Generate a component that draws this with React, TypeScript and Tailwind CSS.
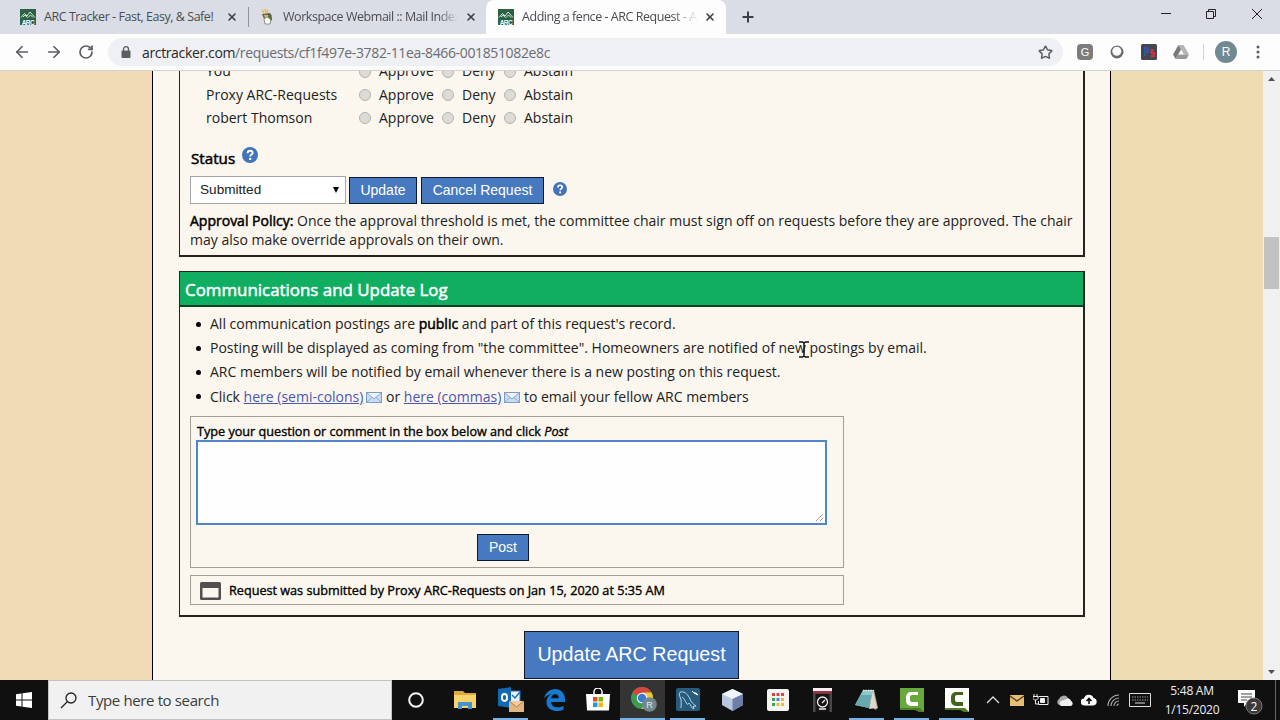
import React from 'react'
import { ArrowLeft, ArrowRight, RotateCw, Star, X, Plus, Minus } from 'lucide-react'

const bold = '[-webkit-text-stroke:0.5px_currentColor]'

function ArcIcon() {
  return (
    <svg width="16" height="16" viewBox="0 0 16 16" className="shrink-0">
      <rect width="16" height="16" fill="#2c6143" />
      <path d="M1 8.500 4.500 4.500 7 7l3-4 5 5.500M3 8l2-1.800L7.500 8.500M8 8.500l2.500-2.500L13 8.500" stroke="#dbe8df" strokeWidth="1" fill="none" />
      <text x="8" y="15.500" textAnchor="middle" fontSize="6.500" fontWeight="bold" fontFamily="Liberation Sans" fill="#fff">ARC</text>
    </svg>
  )
}

function WebmailIcon() {
  return (
    <svg width="12" height="16" viewBox="0 0 12 16" className="shrink-0">
      <path d="M1 1l2 3M4 0l1 3M7 1L6 4" stroke="#eeb45c" strokeWidth="1.500" />
      <path d="M1 5l8-1 2 3-2 3H3z" fill="#62683d" />
      <path d="M3 6h4v3H4z" fill="#d8b777" />
      <path d="M3 10l3-2 4 2-1 5H4z" fill="#fff" stroke="#777d5c" strokeWidth=".8" />
      <path d="M8 9l3-1v4z" fill="#4e7443" />
    </svg>
  )
}

function TabBar() {
  return (
    <div className="flex h-[34px] bg-[#dadde5] pl-5 text-[12.5px] tracking-[-0.46px] text-[#4a4c50]">
      <div className="flex w-[228px] items-center">
        <ArcIcon />
        <span className="ml-2 w-[178px] whitespace-nowrap">ARC Tracker - Fast, Easy, &amp; Safe!</span>
        <X size={12} strokeWidth={3.2} className="ml-1 text-[#3e4044]" />
      </div>
      <div className="my-auto h-5 w-px bg-[#8f9298]" />
      <div className="flex w-[237px] items-center pl-3">
        <WebmailIcon />
        <span className="ml-[10px] w-[175px] overflow-hidden whitespace-nowrap [mask-image:linear-gradient(to_right,black_155px,transparent)]">Workspace Webmail :: Mail Index</span>
        <X size={12} strokeWidth={3.2} className="ml-[7px] shrink-0 text-[#3e4044]" />
      </div>
      <div className="flex w-[240px] items-center rounded-t-lg bg-[#fdfdfe] pl-3">
        <ArcIcon />
        <span className="ml-2 w-[176px] overflow-hidden whitespace-nowrap [mask-image:linear-gradient(to_right,black_150px,transparent)]">Adding a fence - ARC Request - ARC</span>
        <X size={12} strokeWidth={3.2} className="ml-[6px] shrink-0 text-[#3e4044]" />
      </div>
      <div className="flex flex-1 items-center pl-[14px]">
        <Plus size={16} strokeWidth={3} className="text-[#3c4043]" />
      </div>
      <div className="flex items-start pt-[7px] pr-[17px] text-[#222]">
        <svg width="10" height="12" viewBox="0 0 10 12" stroke="#222"><path d="M0 6.500h10" /></svg>
        <svg width="12" height="12" viewBox="0 0 12 12" className="ml-[34px] mt-px" fill="none" stroke="#222">
          <path d="M1.500 3.500h7v7h-7zM3.500 3V1.500h7v7H9" />
        </svg>
        <svg width="12" height="12" viewBox="0 0 12 12" className="ml-[34px] mt-px" stroke="#222">
          <path d="M1 1l10 10M11 1L1 11" />
        </svg>
      </div>
    </div>
  )
}

function AddressBar() {
  return (
    <div className="flex h-[37px] items-center border-b border-[#d4d2cc] bg-[#fdfdfe] pl-[13px] text-[#5b5e62]">
      <ArrowLeft size={18} strokeWidth={2.3} />
      <ArrowRight size={18} strokeWidth={2.3} className="ml-[14px]" />
      <RotateCw size={16} strokeWidth={2.6} className="ml-[15px]" />
      <div className="ml-[14px] flex h-7 w-[955px] items-center rounded-full bg-[#eff0f3] pl-[13px]">
        <svg width="10" height="12" viewBox="0 0 10 12">
          <rect x="0.500" y="4.500" width="9" height="7.500" rx="1" fill="#5b5e62" />
          <path d="M2.500 5V3.200a2.500 2.500 0 015 0V5" fill="none" stroke="#5b5e62" strokeWidth="1.300" />
        </svg>
        <span className="ml-[11px] flex-1 whitespace-nowrap text-[14px] tracking-[-0.36px] text-[#6a6d72]">
          <span className="text-[#26282b]">arctracker.com</span>/requests/cf1f497e-3782-11ea-8466-001851082e8c
        </span>
        <Star size={15} strokeWidth={2.4} className="mr-[10px]" />
      </div>
      <div className="ml-[14px] flex size-4 items-center justify-center rounded-sm bg-[#7c7c7f] font-['Liberation_Sans'] text-[11px] text-white">G</div>
      <svg width="14" height="14" viewBox="0 0 14 14" className="ml-[17px]">
        <circle cx="7" cy="7" r="6.500" fill="#696b6e" />
        <circle cx="6.800" cy="6.300" r="4.500" fill="#fafafa" />
      </svg>
      <svg width="16" height="16" viewBox="0 0 16 16" className="ml-[17px]">
        <rect width="16" height="16" rx="1.500" fill="#45474d" />
        <path d="M4 12V4h3v4H4" stroke="#2e57a8" strokeWidth="2" fill="none" />
        <path d="M13 6h-2.500v3H13v3h-3" stroke="#d02f44" strokeWidth="2" fill="none" />
      </svg>
      <svg width="16" height="14" viewBox="0 0 16 14" className="ml-4">
        <path d="M5.500 0h5L16 9.500h-5z" fill="#b5b5b5" />
        <path d="M5.500 0L8 4.500 2.700 14 0 9.500z" fill="#777" />
        <path d="M5.200 9.500H16L13.400 14H2.700z" fill="#999" />
      </svg>
      <div className="ml-[14px] h-4 w-px bg-[#d4d6da]" />
      <div className="ml-[11px] flex size-[22px] items-center justify-center rounded-full bg-[#718991] font-['Liberation_Sans'] text-[12px] text-white">R</div>
      <svg width="4" height="14" viewBox="0 0 4 14" className="ml-[19px]" fill="#5b5e62">
        <circle cx="2" cy="2" r="1.500" />
        <circle cx="2" cy="7" r="1.500" />
        <circle cx="2" cy="12" r="1.500" />
      </svg>
    </div>
  )
}

function Help({ size }: { size: number }) {
  return (
    <svg width={size} height={size} viewBox="0 0 16 16">
      <circle cx="8" cy="8" r="8" fill="#4373b8" />
      <path d="M5.600 6.200C5.600 4.500 6.700 3.700 8.100 3.700s2.500.8 2.500 2.200c0 1.700-2.300 1.700-2.300 3.500" fill="none" stroke="#fff" strokeWidth="1.900" />
      <circle cx="8.200" cy="11.900" r="1.200" fill="#fff" />
    </svg>
  )
}

function Radio() {
  return <span className="mt-[2px] block size-3 rounded-full border border-[#b5b3ae] bg-[#dddbd6]" />
}

function VoteRow({ name }: { name: string }) {
  return (
    <div className="flex h-[23.4px] items-center pl-[15px]">
      <span className="w-[153px]">{name}</span>
      <Radio />
      <span className="ml-[8px] w-[63px]">Approve</span>
      <Radio />
      <span className="ml-[8px] w-[42px]">Deny</span>
      <Radio />
      <span className="ml-[8px]">Abstain</span>
    </div>
  )
}

function Envelope() {
  return (
    <svg width="16" height="11" viewBox="0 0 16 11" className="ml-[3px] inline-block">
      <rect x=".5" y=".5" width="15" height="10" fill="#c9dcf3" stroke="#7f9cc9" />
      <path d="M1 1l7 6 7-6M1 10l5-4.500M15 10l-5-4.500" stroke="#8fadd8" fill="none" />
      <path d="M2 1h12L8 6z" fill="#edf4fc" />
    </svg>
  )
}

const btn = "flex h-[27px] items-center justify-center border-[1.500px] border-[#10182a] bg-[#4679bf] font-['Liberation_Sans'] text-[14px] text-white"

function Page() {
  return (
    <div className="flex h-[609px] overflow-hidden bg-[#efdab4]">
      <div className="w-[152px] shrink-0 bg-[#f0dab5]" />
      <main className="h-[609px] w-[959px] shrink-0 overflow-hidden border-x border-black bg-[#fbf6ee] pl-[26px] text-[14px] text-[#222]">
        <section className="h-[186px] w-[906px] overflow-hidden border-2 border-t-0 border-l border-[#24231f] pl-[11px]">
          <div className="-mt-[12px]">
            <VoteRow name="You" />
            <VoteRow name="Proxy ARC-Requests" />
            <VoteRow name="robert Thomson" />
          </div>
          <div className="mt-[14px] flex h-[24px] items-center text-[15.2px] text-black">
            <span className={`mt-[6px] ${bold}`}>Status</span>
            <span className="ml-[7px]"><Help size={16} /></span>
          </div>
          <div className="mt-[9px] flex items-center">
            <div className="-ml-px flex h-7 w-[156px] items-center justify-between border border-[#a3a6ab] bg-white pr-[6px] pl-[9px] font-['Liberation_Sans'] text-[13.6px] text-[#222]">
              Submitted
              <svg width="6" height="6" viewBox="0 0 6 6"><path d="M0 0h6L3 6z" fill="#000" /></svg>
            </div>
            <div className={`ml-[3px] w-[68px] ${btn}`}>Update</div>
            <div className={`ml-1 w-[123px] ${btn}`}>Cancel Request</div>
            <span className="ml-[9px] -mt-[2px]"><Help size={14} /></span>
          </div>
          <p className="mt-[7px] -ml-px leading-[19px] whitespace-nowrap">
            <span className={`text-black ${bold}`}>Approval Policy:</span> Once the approval threshold is met, the committee chair must sign off on requests before they are approved. The chair<br />
            may also make override approvals on their own.
          </p>
        </section>
        <section className="mt-[14px] h-[346px] w-[906px] border-2 border-t border-l border-[#24231f]">
          <h2 className={`h-[35px] border-b-2 border-[#123c24] bg-[#0fae61] pl-[5px] text-[16.9px] leading-[35px] text-white ${bold}`}>Communications and Update Log</h2>
          <ul className="h-[109px] pt-[4.500px] pl-[16px]">
            {[
              <>All communication postings are <span className={`text-black ${bold}`}>public</span> and part of this request&apos;s record.</>,
              <>Posting will be displayed as coming from &quot;the committee&quot;. Homeowners are notified of new postings by email.</>,
              <>ARC members will be notified by email whenever there is a new posting on this request.</>,
              <>
                Click <a className="text-[#4a57b5] underline">here (semi-colons)</a><Envelope /> or <a className="text-[#4a57b5] underline">here (commas)</a><Envelope /> to email your fellow ARC members
              </>,
            ].map((item, i) => (
              <li key={i} className="flex h-[24.2px] items-center whitespace-nowrap">
                <span className="mt-px mr-[9px] size-[5px] rounded-full bg-black" />
                <span>{item}</span>
              </li>
            ))}
          </ul>
          <div className="ml-[10px] h-[152px] w-[654px] border border-[#a29f9a] pt-[5px] pl-[5px] text-[12.65px] text-black">
            <div className="h-[18px] pl-px leading-[18px] whitespace-nowrap [-webkit-text-stroke:0.35px_black]">
              Type your question or comment in the box below and click <i>Post</i>
            </div>
            <div className="flex h-[85px] w-[631px] items-end justify-end border-2 border-[#5186cb] bg-[#fefefe]">
              <svg width="10" height="10" viewBox="0 0 10 10" stroke="#888" strokeWidth=".8"><path d="M1 8l7-7M5 8l3-3" /></svg>
            </div>
            <div className={`mt-[9px] ml-[281px] w-[52px] ${btn}`}>Post</div>
          </div>
          <div className="mt-[7px] ml-[10px] flex h-[30px] w-[654px] items-center border border-[#a29f9a] pl-[9px] text-[12.65px] text-black">
            <svg width="21" height="18" viewBox="0 0 21 18" className="mt-px">
              <rect width="21" height="18" rx="1.500" fill="#534f50" />
              <rect x="2.500" y="6" width="16" height="9.500" fill="#fbf6ee" />
            </svg>
            <span className="ml-2 whitespace-nowrap [-webkit-text-stroke:0.35px_black]">Request was submitted by Proxy ARC-Requests on Jan 15, 2020 at 5:35 AM</span>
          </div>
        </section>
        <div className="mt-[14px] ml-[345px] flex h-[48px] w-[215px] items-center justify-center border border-[#10182a] bg-[#4679bf] font-['Liberation_Sans'] text-[19.7px] text-white">
          Update ARC Request
        </div>
      </main>
      <div className="flex-1 bg-[#eedcb2]" />
      <div className="flex w-[17px] flex-col items-center bg-[#f0f0f0] pt-[6px] pb-[6px]">
        <svg width="7" height="4" viewBox="0 0 7 4"><path d="M0 4h7L3.500 0z" fill="#505050" /></svg>
        <div className="mt-[156px] h-[52px] w-[15px] bg-[#c2c2c3]" />
        <svg width="7" height="4" viewBox="0 0 7 4" className="mt-auto"><path d="M0 0h7L3.500 4z" fill="#505050" /></svg>
      </div>
    </div>
  )
}

function Camtasia({ light }: { light?: boolean }) {
  return (
    <svg width="24" height="24" viewBox="0 0 24 24">
      <path d="M0 0h24v24l-5-3H0z" fill={light ? '#fff' : '#69a83a'} />
      <path d="M0 20h20l4 4H19l-4-2H0z" fill="#4f7f2a" />
      <path d="M18 7V4h-7a5 5 0 00-5 5v4a5 5 0 005 5h7v-4h-6a2 2 0 01-2-2v-3a2 2 0 012-2z" fill={light ? '#43641d' : '#fff'} />
    </svg>
  )
}

const apps: { width: number; line?: boolean; active?: boolean; icon: React.ReactNode }[] = [
  { width: 48, icon: <svg width="16" height="16" viewBox="0 0 16 16"><circle cx="8" cy="8" r="6.800" fill="none" stroke="#f2f2f2" strokeWidth="2" /></svg> },
  {
    width: 49,
    icon: (
      <svg width="22" height="18" viewBox="0 0 22 18">
        <path d="M0 0h9l2 2h11v15H0z" fill="#dba93c" />
        <path d="M0 4h22v13H0z" fill="#f7d56c" />
        <path d="M4 18v-7h14v7h-4v-3H8v3z" fill="#4594cf" />
      </svg>
    ),
  },
  {
    width: 43,
    line: true,
    icon: (
      <svg width="26" height="25" viewBox="0 0 26 25">
        <rect x="10" y="4" width="12" height="14" fill="#e7f1fa" stroke="#1e74bd" />
        <path d="M14 8l3 3 5-6" stroke="#1a70bc" strokeWidth="1.500" fill="none" />
        <path d="M0 2l13-2v21L0 19z" fill="#1269b3" />
        <ellipse cx="6.500" cy="10.500" rx="2.600" ry="3.500" fill="none" stroke="#fff" strokeWidth="1.800" />
        <rect x="11" y="14" width="15" height="11" fill="#e2b583" />
        <path d="M11 14l7.500 6 7.500-6" stroke="#b07c45" fill="#f0caa0" />
      </svg>
    ),
  },
  {
    width: 44,
    icon: (
      <svg width="21" height="22" viewBox="0 0 21 22">
        <path d="M0 9.500C1.500 3.500 6 0 11 0c6.500 0 10 5 10 10v3H7c.5 4.200 3.500 5.300 6.500 5.300 2.500 0 4.500-.7 6-1.600v4C17.500 21.500 15 22 12.500 22 6.500 22 2.500 18.500 2.500 13c0-3.500 1.800-6.600 5-8C4.800 5.200 1.800 7 0 9.500zM7.200 9.200h7.600c0-2.400-1.300-3.900-3.600-3.900S7.700 6.900 7.200 9.200z" fill="#1779cf" />
      </svg>
    ),
  },
  {
    width: 44,
    icon: (
      <svg width="24" height="23" viewBox="0 0 24 23">
        <path d="M8 7V4a4 4 0 018 0v3" stroke="#fff" strokeWidth="1.500" fill="none" />
        <path d="M0 6h24l-1 16.500H1z" fill="#fff" />
        <path d="M7 9h4.500v4.500H7z" fill="#e54f25" />
        <path d="M12.500 9H17v4.500h-4.500z" fill="#7cb60a" />
        <path d="M7 14.500h4.500V19H7z" fill="#1a9de4" />
        <path d="M12.500 14.500H17V19h-4.500z" fill="#f6b80e" />
      </svg>
    ),
  },
  {
    width: 45,
    line: true,
    active: true,
    icon: (
      <svg width="26" height="25" viewBox="0 0 26 25" className="ml-[3px]">
        <circle cx="11" cy="11" r="11" fill="#3d9c50" />
        <path d="M11 11L1.500 5.500A11 11 0 0120.500 5.500H11z" fill="#d8433a" />
        <path d="M11 5.500h9.500A11 11 0 0110.500 22L16 13.500z" fill="#f4c634" />
        <circle cx="11" cy="11" r="5.300" fill="#fff" />
        <circle cx="11" cy="11" r="4.200" fill="#3e77d4" />
        <circle cx="18.500" cy="17.500" r="7.300" fill="#708890" />
        <text x="18.500" y="21" textAnchor="middle" fontSize="9" fontFamily="Liberation Sans" fill="#e5ebed">R</text>
      </svg>
    ),
  },
  {
    width: 45,
    line: true,
    icon: (
      <svg width="24" height="23" viewBox="0 0 24 23">
        <rect width="24" height="23" rx="2" fill="#285c7c" />
        <path d="M5 20c0-4 1-7-1-11-1-3-1-5 1-5 4-1 7 3 9 7 1 3 3 5 6 7l-3 .5 1 2.500c-3-1-3-4-5-6-1 1-1 2-2 1-2-3-3-6-5-7" stroke="#b8d6e2" strokeWidth="1" fill="none" />
        <path d="M16 3l2 2h2l2 2-2-1-2-1z" stroke="#fff" fill="#fff" />
      </svg>
    ),
  },
  {
    width: 45,
    icon: (
      <svg width="21" height="22" viewBox="0 0 21 22">
        <path d="M10.500 0L21 5v11l-10.500 6L0 16V5z" fill="#b9c7df" />
        <path d="M10.500 0L21 5l-10.500 5L0 5z" fill="#eff5fb" />
        <path d="M10.500 10L21 5v11l-10.500 6z" fill="#6f7ea9" />
      </svg>
    ),
  },
  {
    width: 45,
    icon: (
      <svg width="22" height="22" viewBox="0 0 22 22">
        <rect width="22" height="22" rx="2" fill="#f4f4f2" />
        <path d="M5 4h3v3H5zm4.500 0h3v3h-3zM14 4h3v3h-3z" fill="#d6453f" />
        <path d="M5 9h3v3H5z" fill="#3ba25d" />
        <path d="M9.500 9h3v3h-3z" fill="#4288d8" />
        <path d="M14 9h3v3h-3zM14 14h3v3h-3zM9.500 14h3v3h-3z" fill="#eeb92c" />
        <path d="M5 14h3v3H5z" fill="#3ba25d" />
      </svg>
    ),
  },
  {
    width: 44,
    icon: (
      <svg width="19" height="24" viewBox="0 0 19 24">
        <path d="M0 1h19v23H0z" fill="#4b4749" />
        <path d="M2.500 6h14v18h-14z" fill="#171516" />
        <path d="M0 0h19v3H0z" fill="#f3f3f3" />
        <path d="M0 3h19v2H0z" fill="#b52843" />
        <circle cx="9.500" cy="14" r="5" fill="none" stroke="#eee" strokeWidth="1.300" />
        <path d="M9 15l3-3M6 21h7" stroke="#eee" strokeWidth="1.300" />
      </svg>
    ),
  },
  {
    width: 45,
    line: true,
    icon: (
      <svg width="23" height="22" viewBox="0 0 23 22">
        <path d="M8 1h11l4 18-3 2z" fill="#aaa69a" />
        <path d="M8 1h10l-4 18-14-3z" fill="#8fc8ca" />
        <path d="M6 6h11l-3 13-14-3z" fill="#66a9ae" />
        <path d="M18 1l4 18-8 1z" fill="#ddd8c9" />
        <path d="M8 1.500h11" stroke="#eee" strokeWidth="1.500" strokeDasharray="1.500 1" />
      </svg>
    ),
  },
  { width: 45, line: true, icon: <Camtasia /> },
  { width: 45, line: true, icon: <Camtasia light /> },
]

function Tray() {
  return (
    <div className="flex flex-1 items-center pl-[7px]">
      <svg width="14" height="8" viewBox="0 0 14 8" fill="none" stroke="#ddd" strokeWidth="1.300"><path d="M1 7l6-6 6 6" /></svg>
      <svg width="14" height="11" viewBox="0 0 14 11" className="ml-[10px]">
        <path d="M0 0h14v11H0z" fill="#e5bd73" />
        <path d="M0 1l7 5 7-5" stroke="#473923" strokeWidth="1.300" fill="none" />
      </svg>
      <svg width="16" height="12" viewBox="0 0 16 12" className="ml-[9px]" fill="none" stroke="#eee">
        <path d="M5.500 2.500h9.500v8H5.500V7M1 0v3M4 0v3M0 2.500h5v2L3.500 6h-2L0 4.500zM2.500 6v4H5" />
        <path d="M7.500 4.500h4v4h-4z" fill="#eee" />
      </svg>
      <svg width="17" height="11" viewBox="0 0 17 11" className="ml-[8px]">
        <path d="M2 10a3.500 3.500 0 010-6 5 5 0 019-1l4 4z" fill="#aaa" />
        <path d="M4 11a3 3 0 010-5l7-2.500a3 3 0 013 2.500 2.700 2.700 0 010 5z" fill="#f0f0f0" />
      </svg>
      <svg width="16" height="12" viewBox="0 0 16 12" className="ml-[7px]">
        <path d="M3.500 11.500a3.500 3.500 0 01-.5-7 5 5 0 019.500-.5 3.800 3.800 0 010 7.500z" fill="#fff" />
        <path d="M8 10V5M5.500 7L8 4.500 10.500 7" stroke="#111" strokeWidth="1.600" fill="none" />
      </svg>
      <svg width="13" height="13" viewBox="0 0 13 13" className="ml-[10px]" fill="none" stroke="#aaa" strokeWidth="1.100">
        <path d="M1 12A11 11 0 0112 1M4 12a8 8 0 018-8M7 12a5 5 0 015-5M10 12a2 2 0 012-2" />
      </svg>
      <svg width="22" height="14" viewBox="0 0 22 14" className="ml-[9px]" fill="none" stroke="#ddd">
        <path d="M.5.500h21v13H.5z" />
        <path d="M3 4h16M3 7h16" strokeDasharray="1.500 1" stroke="#999" />
        <path d="M6 10h10" />
      </svg>
      <div className="mt-px ml-[11px] w-[60px] text-center text-[12px] leading-[18.500px] tracking-[-0.25px] whitespace-nowrap text-[#eee]">
        <div>5:48 AM</div>
        <div>1/15/2020</div>
      </div>
      <svg width="26" height="26" viewBox="0 0 26 26" className="mt-[3px] ml-[16px]">
        <path d="M0 1h17v13H9l-3 4v-4H0z" fill="#fff" />
        <path d="M3 5h11M3 8h11M3 11h6" stroke="#444" />
        <circle cx="16" cy="17" r="8" fill="#3a3a3a" stroke="#777" />
        <text x="16" y="21.500" textAnchor="middle" fontSize="12" fontFamily="Open Sans" fill="#fff">2</text>
      </svg>
      <div className="ml-auto h-10 w-px bg-[#666]" />
      <div className="w-[4px]" />
    </div>
  )
}

function Taskbar() {
  return (
    <div className="flex h-10 bg-[#101010]">
      <div className="flex w-12 items-center justify-center">
        <svg width="16" height="16" viewBox="0 0 16 16" fill="#fff">
          <path d="M0 2.300L5.500 1.500v6H0zM6.500 1.300L16 0v7.500H6.500zM0 8.500h5.500v6L0 13.700zM6.500 8.500H16V16l-9.500-1.300z" />
        </svg>
      </div>
      <div className="flex w-[344px] items-center border border-[#c3c3c3] bg-[#f1f1f1] pl-[11px]">
        <svg width="17" height="17" viewBox="0 0 17 17" fill="none" stroke="#222" strokeWidth="1.300"><circle cx="11" cy="6" r="5" /><path d="M7.500 9.500L1 16" /></svg>
        <span className="mt-px ml-[11px] text-[15px] tracking-[-0.37px] text-[#3c3c3c]">Type here to search</span>
      </div>
      {apps.map((app, i) => (
        <div key={i} style={{ width: app.width }} className={`flex shrink-0 flex-col items-center ${app.active ? 'bg-[#343434]' : ''}`}>
          <div className="flex flex-1 items-center justify-center pt-px">{app.icon}</div>
          <div className={`h-[2px] ${app.active ? 'w-full' : 'w-[35px]'} ${app.line ? 'bg-[#76b1e8]' : ''}`} />
        </div>
      ))}
      <Tray />
    </div>
  )
}

export default function App() {
  return (
    <div className="relative h-[720px] w-[1280px] overflow-hidden font-['Open_Sans',sans-serif]">
      <TabBar />
      <AddressBar />
      <Page />
      <Taskbar />
      <svg width="10" height="17" viewBox="0 0 10 17" className="absolute top-[341px] left-[799px]" fill="none" stroke="#111" strokeWidth="1.500">
        <path d="M0 1h3.500L5 2l1.500-1H10M5 2v13M0 16h3.500L5 15l1.500 1H10" />
      </svg>
    </div>
  )
}
